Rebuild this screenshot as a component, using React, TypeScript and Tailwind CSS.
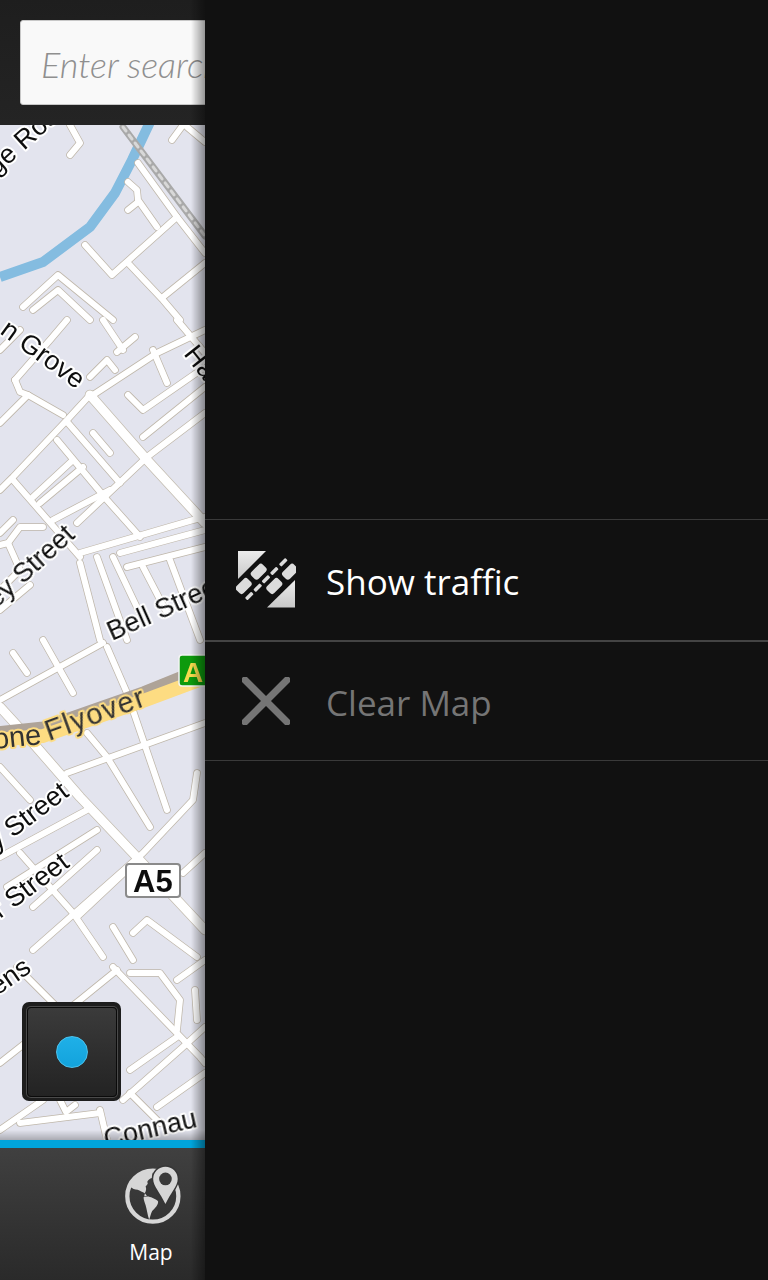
const minorRoads = [
  '138,163 177,217 205,253',
  '128,182 137,190 138,200 157,227',
  '128,210 138,202',
  '85,245 112,275 177,217',
  '128,263 163,300 180,320',
  '163,297 205,263',
  '172,140 183,125',
  '70,155 80,143 70,125',
  '187,127 205,142',
  '23,307 58,275 113,320',
  '33,310 58,290 90,320',
  '0,423 28,395 63,415',
  '15,380 50,340 67,320',
  '0,350 20,330',
  '15,380 20,392 28,395',
  '90,377 107,360 115,370',
  '93,395 157,353 205,330',
  '90,395 67,420 13,477 0,490',
  '57,440 107,500 140,537',
  '68,423 120,483',
  '205,387 143,437',
  '205,413 147,457 77,523',
  '13,480 80,557',
  '33,497 73,460',
  '40,503 83,467',
  '53,520 110,490',
  '0,533 13,520',
  '0,610 30,585',
  '80,553 193,520 205,517',
  '120,553 205,530',
  '80,563 100,640',
  '97,557 127,640',
  '113,557 143,620',
  '127,567 205,547',
  '143,567 167,613',
  '170,560 200,640',
  '103,320 123,350',
  '117,352 135,337',
  '128,395 143,410 205,367',
  '167,383 153,350',
  '177,320 205,353',
  '93,433 110,453',
  '0,545 8,543 20,527 43,527',
  '8,543 20,570 0,590',
  '0,700 103,643',
  '13,653 27,673',
  '43,640 73,693',
  '107,647 127,693 167,810',
  '87,733 107,757 150,827',
  '67,773 205,723',
  '197,773 193,800 143,853 33,950',
  '0,857 87,810',
  '7,887 97,830',
  '33,907 97,850',
  '0,767 30,800',
  '20,853 73,913 103,957',
  '77,917 127,870',
  '183,873 205,853',
  '113,927 133,960',
  '133,933 147,920 197,957',
  '117,970 80,1000 0,1063',
  '17,967 67,1017',
  '113,967 200,1057 205,1063',
  '177,1037 130,1070',
  '205,1027 183,1047 123,1100',
  '205,1073 157,1107',
  '130,973 160,973 180,1000 177,1030',
  '195,990 197,1020',
  '130,1093 160,1123',
  '20,1123 100,1113',
  '100,1110 107,1140',
  '0,1130 43,1100',
  '177,980 205,960',
  '60,1100 66,1112 75,1105',
];

const majorRoads = ['90,395 147,460 205,523', '0,707 33,743 80,797 133,853 205,930'];

const labelClass =
  "fill-[#111] stroke-white text-[27px] font-['Liberation_Sans'] [paint-order:stroke] [stroke-width:4px] [stroke-linejoin:round]";

const roadLabelClass =
  "fill-[#333] stroke-[#fddc82] text-[29px] font-['Liberation_Sans'] [paint-order:stroke] [stroke-width:4px] [stroke-linejoin:round]";

const labels = [
  { text: 'ge Road', x: -4, y: 176, angle: -42 },
  { text: 'n Grove', x: -1, y: 333, angle: 36 },
  { text: 'Ha', x: 183, y: 354, angle: 52 },
  { text: 'ey Street', x: -4, y: 609, angle: -42 },
  { text: 'Bell Street', x: 112, y: 641, angle: -24 },
  { text: 'y Street', x: -4, y: 851, angle: -37 },
  { text: 'r Street', x: 0, y: 919, angle: -37 },
  { text: 'ens', x: -3, y: 996, angle: -35 },
  { text: 'Connau', x: 106, y: 1148, angle: -13 },
];

function MapDrawing() {
  return (
    <svg viewBox="0 125 205 1015" className="block h-full w-full">
      <defs>
        <filter id="soft">
          <feGaussianBlur stdDeviation="0.45" />
        </filter>
      </defs>
      <rect x="0" y="125" width="205" height="1015" fill="#e3e4ee" />
      <g filter="url(#soft)" fill="none" strokeLinecap="round" strokeLinejoin="round">
        <polyline points="150,122 132,160 115,193 90,227 43,262 0,277" stroke="#84bce0" strokeWidth="10" strokeLinecap="butt" />
        <line x1="123" y1="127" x2="205" y2="236" stroke="#a9a9a9" strokeWidth="7" />
        <line x1="123" y1="127" x2="205" y2="236" stroke="#d8d8d8" strokeWidth="3" strokeDasharray="5 5" />
        {minorRoads.map((points) => (
          <polyline key={points} points={points} stroke="#bfb7aa" strokeWidth="7.5" />
        ))}
        {majorRoads.map((points) => (
          <polyline key={points} points={points} stroke="#c4bdb0" strokeWidth="10.5" />
        ))}
        {minorRoads.map((points) => (
          <polyline key={points} points={points} stroke="#ffffff" strokeWidth="6" />
        ))}
        {majorRoads.map((points) => (
          <polyline key={points} points={points} stroke="#ffffff" strokeWidth="9" />
        ))}
        <polyline points="-5,731 43,726 100,706 143,691 210,664" stroke="#aea398" strokeWidth="9" />
        <polyline points="-5,740 43,736 100,716 143,701 210,676" stroke="#fddc82" strokeWidth="14" strokeLinecap="butt" />
      </g>
      <g filter="url(#soft)">
        {labels.map((label) => (
          <text
            key={label.text}
            x={label.x}
            y={label.y}
            transform={`rotate(${label.angle} ${label.x} ${label.y})`}
            className={labelClass}
          >
            {label.text}
          </text>
        ))}
        <text x="-6" y="749" transform="rotate(-6 -6 749)" className={roadLabelClass}>
          one
        </text>
        <text x="49" y="741" transform="rotate(-20 49 741)" className={`${roadLabelClass} tracking-[1.5px]`}>
          Flyover
        </text>
        <rect x="179" y="655" width="32" height="31" rx="3" fill="#0c9a10" stroke="#f4f4f4" strokeWidth="1.5" />
        <text x="183" y="682" className="fill-[#f6da4e] text-[28px] font-bold font-['Liberation_Sans']">
          A
        </text>
        <rect x="126" y="864" width="54" height="33" rx="3" fill="#ffffff" stroke="#8a8a8a" strokeWidth="2" />
        <text x="133" y="892" className="fill-[#111] text-[31px] font-bold font-['Liberation_Sans']">
          A5
        </text>
      </g>
    </svg>
  );
}

function MapTabIcon() {
  return (
    <svg viewBox="40 40 190 190" className="ml-[6px] h-[63px] w-[63px]">
      <circle cx="130" cy="137" r="77" fill="none" stroke="#d6d6d6" strokeWidth="13" />
      <path d="M60 108 C66 90 88 70 130 60 L128 82 C120 84 116 88 113 94 C118 100 110 104 108 108 C112 116 108 124 106 128 C98 126 92 120 84 118 C76 118 68 114 60 108 Z" fill="#d6d6d6" />
      <path d="M106 128 L112 136 L104 138 Z" fill="#d6d6d6" />
      <path d="M102 140 C110 136 122 138 128 142 C136 146 146 150 146 154 C146 164 136 174 128 182 C124 190 122 200 119 208 C114 196 112 176 108 164 C106 156 102 148 102 140 Z" fill="#d6d6d6" />
      <path d="M168 48 a37 37 0 0 1 37 37 c0 22 -22 42 -37 76 c-15 -34 -37 -54 -37 -76 a37 37 0 0 1 37 -37 Z" fill="#d6d6d6" stroke="#363636" strokeWidth="9" paintOrder="stroke" />
      <circle cx="168" cy="85" r="19" fill="#3a3a3a" />
    </svg>
  );
}

function TrafficIcon() {
  return (
    <svg viewBox="0 0 60 60" className="h-[60px] w-[60px]">
      <defs>
        <linearGradient id="traffic" x1="0" y1="0" x2="0" y2="1">
          <stop offset="0" stopColor="#ececec" />
          <stop offset="1" stopColor="#c8c8c8" />
        </linearGradient>
      </defs>
      <path d="M2 1 H30 L2 29 Z" fill="url(#traffic)" />
      <path d="M59 30 V57.5 H31 Z" fill="url(#traffic)" />
      {[
        [22.7, 21.7],
        [7.7, 36],
        [54, 21.7],
        [38.3, 36],
      ].map(([x, y]) => (
        <rect key={x} x={x - 8} y={y - 5} width="16" height="10" rx="3" fill="#dcdcdc" transform={`rotate(-45 ${x} ${y})`} />
      ))}
      {[
        [47.3, 12.3],
        [38.3, 21],
        [30, 29.3],
        [21.7, 37.7],
        [13.3, 46],
      ].map(([x, y]) => (
        <rect key={x} x={x - 4.5} y={y - 1.8} width="9" height="3.6" rx="1" fill="#dcdcdc" transform={`rotate(-45 ${x} ${y})`} />
      ))}
    </svg>
  );
}

function ClearIcon() {
  return (
    <svg viewBox="0 0 48 48" className="h-[48px] w-[48px]">
      <path d="M3 3 L45 45 M45 3 L3 45" stroke="#757575" strokeWidth="7" strokeLinecap="round" fill="none" />
    </svg>
  );
}

export default function App() {
  return (
    <div className="flex h-[1280px] w-[768px] overflow-hidden bg-[#111111]">
      <div className="relative flex w-[205px] shrink-0 flex-col overflow-hidden">
        <div className="h-[125px] shrink-0 bg-gradient-to-b from-[#1e1e1e] to-[#242424] pl-[20px] pt-[20px]">
          <div className="flex h-[85px] w-[400px] items-center rounded-[3px] border border-[#c8c8c8] bg-[#f9f9f9] pl-[20px] pt-[2px] font-['Lato'] text-[36px] font-light italic text-[#8f8f8f]">
            Enter search
          </div>
        </div>
        <div className="relative min-h-0 flex-1">
          <MapDrawing />
          <div className="absolute inset-x-0 bottom-0 h-[10px] bg-gradient-to-b from-transparent to-black/25" />
          <div className="absolute left-[22px] top-[877px] flex h-[99px] w-[99px] items-center justify-center rounded-[7px] bg-[#1d1d1d]">
            <div className="flex h-[90px] w-[90px] items-center justify-center rounded-[4px] border border-[#0a0a0a] bg-gradient-to-b from-[#3b3b3b] to-[#232323] shadow-[0_0_0_1px_#4a4a4a]">
              <div className="h-[32px] w-[32px] rounded-full border border-[#4cc3ee] bg-gradient-to-b from-[#1fb0e8] to-[#12a3dc]" />
            </div>
          </div>
        </div>
        <div className="h-[8px] shrink-0 bg-[#00a5dc]" />
        <div className="flex h-[132px] shrink-0 justify-end bg-gradient-to-b from-[#404040] to-[#2a2a2a]">
          <div className="flex w-[108px] flex-col items-center pt-[16px]">
            <MapTabIcon />
            <span className="mt-[11px] font-['Open_Sans'] text-[21px] leading-[28px] text-white">Map</span>
          </div>
        </div>
        <div className="absolute inset-y-0 right-0 w-[14px] bg-gradient-to-r from-transparent to-black/40" />
      </div>

      <div className="flex-1 pt-[519px]">
        <div className="flex h-[121px] items-center border-t border-[#3a3a3a]">
          <div className="flex w-[121px] shrink-0 justify-center">
            <TrafficIcon />
          </div>
          <span className="pt-[4px] font-['Open_Sans'] text-[35px] text-white">Show traffic</span>
        </div>
        <div className="flex h-[120px] items-center border-t-2 border-[#444444]">
          <div className="flex w-[121px] shrink-0 justify-center">
            <ClearIcon />
          </div>
          <span className="pt-[4px] font-['Open_Sans'] text-[35px] text-[#757575]">Clear Map</span>
        </div>
        <div className="border-t border-[#3a3a3a]" />
      </div>
    </div>
  );
}
